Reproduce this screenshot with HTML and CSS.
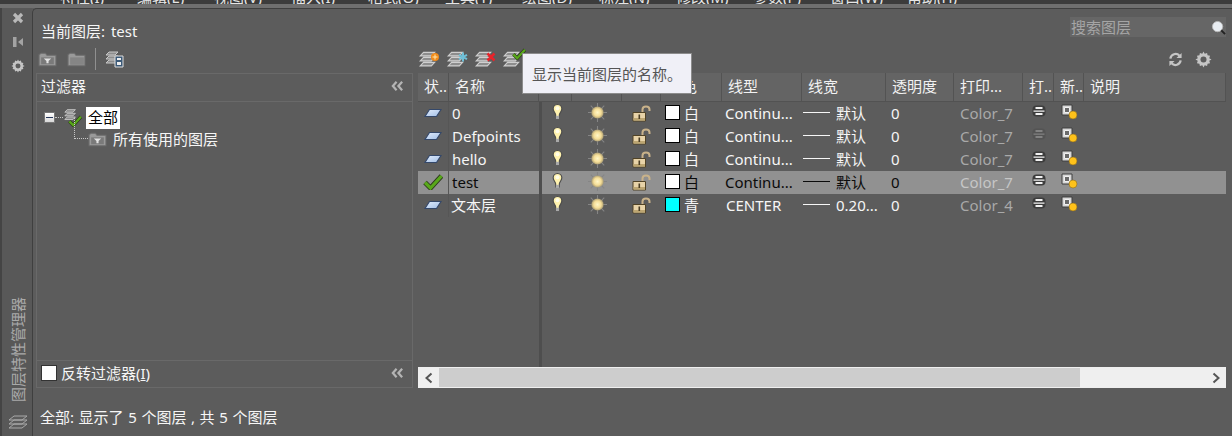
FILE: index.html
```html
<!DOCTYPE html>
<html lang="zh">
<head>
<meta charset="utf-8">
<title>图层特性管理器</title>
<link rel="stylesheet" href="styles.css">
</head>
<body>
<svg class="defs" width="0" height="0" aria-hidden="true">
  <defs>
    <radialGradient id="sunG"><stop offset="0" stop-color="#fff6c8"/><stop offset=".6" stop-color="#f5dd96"/><stop offset="1" stop-color="#a89a72"/></radialGradient>
    <linearGradient id="paneG" x1="0" y1="0" x2="1" y2="1"><stop offset="0" stop-color="#e4eefc"/><stop offset="1" stop-color="#9fbde6"/></linearGradient>
    <symbol id="stack" viewBox="0 0 18 16">
      <path d="M5 2h10l-3 3.200H2zM5 6.500h10l-3 3.200H2zM5 11h10l-3 3.200H2z" fill="#8d8d8d" stroke="#cfcfcf" stroke-width="1"/>
    </symbol>
    <symbol id="folderF" viewBox="0 0 18 14">
      <path d="M1 2.500 3 1h4l1.500 2H17v10H1z" fill="#9a9a9a" stroke="#6e6e6e"/>
      <path d="M3 5h12v6.500H3z" fill="#7a7a7a"/>
      <path d="M5.500 6h7L10 8.400V10.500H8V8.400z" fill="#e2e2e2"/>
    </symbol>
    <symbol id="folder" viewBox="0 0 18 14">
      <path d="M1 2.500 3 1h4l1.500 2H17v10H1z" fill="#9a9a9a" stroke="#6e6e6e"/>
      <path d="M3 5h13v7H3z" fill="#858585"/>
    </symbol>
    <symbol id="pane" viewBox="0 0 18 10">
      <path d="M5.500 1.500H17L12.500 8.500H1z" fill="url(#paneG)" stroke="#34486a" stroke-width="1.100"/>
    </symbol>
    <symbol id="check" viewBox="0 0 20 16">
      <path d="M2 8.500 7.500 14 18.500 2" fill="none" stroke="#2e3a1e" stroke-width="5"/>
      <path d="M2 8.500 7.500 14 18.500 2" fill="none" stroke="#58a81a" stroke-width="3.200"/>
    </symbol>
    <symbol id="bulb" viewBox="0 0 12 16">
      <path d="M6 1C3.400 1 2 3 2 5c0 2.200 1.700 3.200 2.300 5.500v3h3.400v-3C8.300 8.200 10 7.200 10 5c0-2-1.400-4-4-4z" fill="#fff2ae" stroke="#494949"/>
      <path d="M4.500 11.500h3v3h-3z" fill="#a9a9a9"/>
      <circle cx="6" cy="4.500" r="1.800" fill="#fffde9"/>
    </symbol>
    <symbol id="sun" viewBox="0 0 18 18">
      <path d="M9 0v3.500M9 14.500V18M0 9h3.500M14.500 9H18M2.600 2.600l2.500 2.500M12.900 12.900l2.500 2.500M15.400 2.600l-2.500 2.500M5.100 12.900l-2.500 2.500" stroke="#858585" stroke-width="1"/>
      <circle cx="9" cy="9" r="5.800" fill="url(#sunG)"/>
    </symbol>
    <symbol id="lock" viewBox="0 0 20 17">
      <path d="M10.500 8V4.500C10.500 2.500 12 1.500 14 1.500s3.500 1 3.500 3v1.500" fill="none" stroke="#c9b28a" stroke-width="2"/>
      <path d="M1 7.500h12.500v8.500H1z" fill="#e8d3a8" stroke="#514326"/>
      <path d="M1.500 13h11.500v2.500H1.500z" fill="#bda672"/>
      <path d="M6.500 9.500h1.600v4.500H6.500z" fill="#4a3d24"/>
    </symbol>
    <symbol id="printer" viewBox="0 0 14 12">
      <rect x=".5" y=".5" width="13" height="11" rx="4" fill="#3d3d3d"/>
      <path d="M3.500 2h7v2h-7zM1.500 5.500h11v1.200h-11zM3.500 8h7v2h-7z" fill="#f2f2f2"/>
    </symbol>
    <symbol id="newvp" viewBox="0 0 17 16">
      <path d="M1 1h10v10H1z" fill="#d8d8d8" stroke="#3e3e3e"/>
      <path d="M3.500 3.500h5v5h-5z" fill="#6a6a6a" stroke="#f0f0f0"/>
      <circle cx="12" cy="11" r="4" fill="#ffc21a" stroke="#8a6a20" stroke-width=".6"/>
    </symbol>
    <symbol id="gear" viewBox="0 0 18 18">
      <path d="M9 .5l1.300 2.300 2.500-.8.500 2.600 2.600.5-.8 2.500L17.500 9l-2.400 1.400.8 2.500-2.600.5-.5 2.600-2.500-.8L9 17.500l-1.300-2.300-2.500.8-.5-2.600-2.600-.5.800-2.500L.5 9l2.400-1.400-.8-2.500 2.600-.5.500-2.600 2.500.8z" fill="#c5c5c5"/>
      <circle cx="9" cy="9" r="3.200" fill="#5c5c5c"/>
    </symbol>
    <symbol id="refresh" viewBox="0 0 16 16">
      <path d="M2.500 7A5.600 5.600 0 0 1 12.200 4M13.500 9A5.600 5.600 0 0 1 3.800 12" fill="none" stroke="#c5c5c5" stroke-width="2.400"/>
      <path d="M14.500 1v5.500H9zM1.500 15V9.500H7z" fill="#c5c5c5"/>
    </symbol>
    <symbol id="dbl" viewBox="0 0 14 12">
      <path d="M6 1.500 2 6l4 4.500M12 1.500 8 6l4 4.500" fill="none" stroke="#b4b4b4" stroke-width="2.400"/>
    </symbol>
  </defs>
</svg>

<div class="app">
  <div class="menu-strip">
    <span>特性(I)</span><span>编辑(E)</span><span>视图(V)</span><span>插入(I)</span><span>格式(O)</span><span>工具(T)</span><span>绘图(D)</span><span>标注(N)</span><span>修改(M)</span><span>参数(P)</span><span>窗口(W)</span><span>帮助(H)</span>
  </div>
  <div class="shell">
    <aside class="rail">
      <svg class="rail-x" viewBox="0 0 12 12"><path d="M2 2l8 8M10 2l-8 8" stroke="#b9b9b9" stroke-width="3.200"/></svg>
      <svg class="rail-pin" viewBox="0 0 12 12"><path d="M1 1h3.500v10H1zM11 2v8L6 6z" fill="#a3a3a3"/></svg>
      <svg class="rail-gear"><use href="#gear"/></svg>
      <div class="rail-title">图层特性管理器</div>
      <svg class="rail-stack" viewBox="0 0 20 18"><path d="M6 3h13l-5 4H1zM6 7h13l-5 4H1zM6 11h13l-5 4H1z" fill="#5c5c5c" stroke="#a8a8a8"/></svg>
    </aside>
    <main class="panel">
      <header class="head">
        <div class="current">当前图层: test</div>
        <div class="search"><span>搜索图层</span>
          <svg class="search-ic" viewBox="0 0 16 16"><circle cx="7" cy="7" r="5.500" fill="#e8edf2" stroke="#b5b5b5"/><path d="M11 11l4 4" stroke="#222" stroke-width="2"/></svg>
        </div>
      </header>
      <div class="tools">
        <div class="tools-left">
          <svg class="t18"><use href="#folderF"/></svg>
          <svg class="t18"><use href="#folder"/></svg>
          <i class="tool-sep"></i>
          <svg class="tstate" viewBox="0 0 21 18"><path d="M5 2h9l-3 3H2zM5 6h9l-3 3H2zM5 10h9l-3 3H2z" fill="#8d8d8d" stroke="#c8c8c8"/><path d="M11 6h8v11h-8z" fill="#3c5a78" stroke="#ddd"/><path d="M13 8h4v2h-4zM13 12h4v3h-4z" fill="#eee"/></svg>
        </div>
        <div class="tools-right">
          <span class="tl"><svg class="tstack"><use href="#stack"/></svg><svg class="badge" viewBox="0 0 10 10"><circle cx="5" cy="5" r="4" fill="#f08a1a"/><path d="M5 2.500v5M2.500 5h5" stroke="#ffe9b0"/></svg></span>
          <span class="tl"><svg class="tstack"><use href="#stack"/></svg><svg class="badge" viewBox="0 0 10 10"><path d="M5 .5v9M1 2.800l8 4.400M9 2.800l-8 4.400" stroke="#6fc0d8" stroke-width="2"/></svg></span>
          <span class="tl"><svg class="tstack"><use href="#stack"/></svg><svg class="badge" viewBox="0 0 10 10"><path d="M1.500 1.500l7 7M8.500 1.500l-7 7" stroke="#e8232a" stroke-width="2.600"/></svg></span>
          <span class="tl"><svg class="tstack"><use href="#stack"/></svg><svg class="badge badge-check"><use href="#check"/></svg></span>
          <span class="tools-end">
            <svg class="t-refresh"><use href="#refresh"/></svg>
            <svg class="t-gear"><use href="#gear"/></svg>
          </span>
        </div>
      </div>
      <div class="content">
        <section class="filters">
          <div class="filters-head"><span>过滤器</span><svg class="dbl"><use href="#dbl"/></svg></div>
          <div class="tree">
            <div class="tree-root">
              <span class="minus"></span><i class="dots"></i>
              <span class="tree-ic"><svg class="ti-stack"><use href="#stack"/></svg><svg class="ti-check"><use href="#check"/></svg></span>
              <span class="tree-sel">全部</span>
            </div>
            <div class="tree-child">
              <i class="elbow"></i>
              <svg class="t18"><use href="#folderF"/></svg>
              <span>所有使用的图层</span>
            </div>
          </div>
          <div class="filters-foot">
            <span class="check-box"></span><span>反转过滤器(<u>I</u>)</span><svg class="dbl"><use href="#dbl"/></svg>
          </div>
        </section>
        <section class="layers">
          <div class="table">
            <div class="row hdr">
              <div>状..</div><div>名称</div><div class="gutter"></div><div></div><div></div><div></div><div>颜色</div><div>线型</div><div>线宽</div><div>透明度</div><div>打印...</div><div>打..</div><div>新..</div><div>说明</div>
            </div>

            <div class="row">
              <div class="c-st"><svg class="ic-pane"><use href="#pane"/></svg></div><div class="c-name">0</div><div class="gutter"></div>
              <div class="c-ic"><svg class="ic-bulb"><use href="#bulb"/></svg></div><div class="c-ic"><svg class="ic-sun"><use href="#sun"/></svg></div><div class="c-ic"><svg class="ic-lock"><use href="#lock"/></svg></div>
              <div class="c-color"><i class="sw"></i>白</div><div class="c-lt">Continu...</div><div class="c-lw"><i class="ln"></i>默认</div><div class="c-tr">0</div><div class="c-ps">Color_7</div>
              <div class="c-ic"><svg class="ic-print"><use href="#printer"/></svg></div><div class="c-ic"><svg class="ic-new"><use href="#newvp"/></svg></div><div></div>
            </div>

            <div class="row">
              <div class="c-st"><svg class="ic-pane"><use href="#pane"/></svg></div><div class="c-name">Defpoints</div><div class="gutter"></div>
              <div class="c-ic"><svg class="ic-bulb"><use href="#bulb"/></svg></div><div class="c-ic"><svg class="ic-sun"><use href="#sun"/></svg></div><div class="c-ic"><svg class="ic-lock"><use href="#lock"/></svg></div>
              <div class="c-color"><i class="sw"></i>白</div><div class="c-lt">Continu...</div><div class="c-lw"><i class="ln"></i>默认</div><div class="c-tr">0</div><div class="c-ps">Color_7</div>
              <div class="c-ic"><svg class="ic-print off"><use href="#printer"/></svg></div><div class="c-ic"><svg class="ic-new"><use href="#newvp"/></svg></div><div></div>
            </div>

            <div class="row">
              <div class="c-st"><svg class="ic-pane"><use href="#pane"/></svg></div><div class="c-name">hello</div><div class="gutter"></div>
              <div class="c-ic"><svg class="ic-bulb"><use href="#bulb"/></svg></div><div class="c-ic"><svg class="ic-sun"><use href="#sun"/></svg></div><div class="c-ic"><svg class="ic-lock"><use href="#lock"/></svg></div>
              <div class="c-color"><i class="sw"></i>白</div><div class="c-lt">Continu...</div><div class="c-lw"><i class="ln"></i>默认</div><div class="c-tr">0</div><div class="c-ps">Color_7</div>
              <div class="c-ic"><svg class="ic-print"><use href="#printer"/></svg></div><div class="c-ic"><svg class="ic-new"><use href="#newvp"/></svg></div><div></div>
            </div>

            <div class="row sel">
              <div class="c-st"><svg class="ic-check"><use href="#check"/></svg></div><div class="c-name">test</div><div class="gutter"></div>
              <div class="c-ic"><svg class="ic-bulb"><use href="#bulb"/></svg></div><div class="c-ic"><svg class="ic-sun"><use href="#sun"/></svg></div><div class="c-ic"><svg class="ic-lock"><use href="#lock"/></svg></div>
              <div class="c-color"><i class="sw"></i>白</div><div class="c-lt">Continu...</div><div class="c-lw"><i class="ln"></i>默认</div><div class="c-tr">0</div><div class="c-ps">Color_7</div>
              <div class="c-ic"><svg class="ic-print"><use href="#printer"/></svg></div><div class="c-ic"><svg class="ic-new"><use href="#newvp"/></svg></div><div></div>
            </div>

            <div class="row">
              <div class="c-st"><svg class="ic-pane"><use href="#pane"/></svg></div><div class="c-name cjk">文本层</div><div class="gutter"></div>
              <div class="c-ic"><svg class="ic-bulb"><use href="#bulb"/></svg></div><div class="c-ic"><svg class="ic-sun"><use href="#sun"/></svg></div><div class="c-ic"><svg class="ic-lock"><use href="#lock"/></svg></div>
              <div class="c-color"><i class="sw cyan"></i>青</div><div class="c-lt center">CENTER</div><div class="c-lw"><i class="ln"></i>0.20...</div><div class="c-tr">0</div><div class="c-ps">Color_4</div>
              <div class="c-ic"><svg class="ic-print"><use href="#printer"/></svg></div><div class="c-ic"><svg class="ic-new"><use href="#newvp"/></svg></div><div></div>
            </div>

            <div class="row filler"><div></div><div></div><div class="gutter"></div></div>
          </div>
          <div class="scroll">
            <svg class="arrow" viewBox="0 0 10 12"><path d="M7.500 1.500 2.500 6l5 4.500" fill="none" stroke="#555" stroke-width="2"/></svg>
            <div class="track"><div class="thumb"></div></div>
            <svg class="arrow" viewBox="0 0 10 12"><path d="M2.500 1.500 7.500 6l-5 4.500" fill="none" stroke="#555" stroke-width="2"/></svg>
          </div>
          <div class="tip">显示当前图层的名称。</div>
        </section>
      </div>
      <footer class="status">全部: 显示了 5 个图层 , 共 5 个图层</footer>
    </main>
  </div>
</div>
</body>
</html>
```

FILE: styles.css
```css
* { box-sizing: border-box; }
html, body { margin: 0; padding: 0; height: 100%; }
body {
  background: #4b4b4b;
  color: #f6f6f6;
  font: 15px/20px "Noto Sans", "Noto Sans CJK SC", sans-serif;
  overflow: hidden;
}
.defs { position: absolute; }
svg { display: block; flex: none; overflow: visible; }

.app { width: 1232px; height: 436px; display: flex; flex-direction: column; }

.menu-strip {
  height: 8px;
  background: #3c3c3c;
  border-bottom: 4px solid #6f6f6f;
  display: flex;
  gap: 33px;
  padding-left: 60px;
  overflow: hidden;
  line-height: 6px;
  color: #e6e6e6;
  white-space: nowrap;
}
.menu-strip span { margin-top: -6px; width: 44px; }

.shell { flex: 1; display: flex; min-height: 0; background: #5b5b5b; }

.rail {
  width: 32px;
  display: flex;
  flex-direction: column;
  align-items: center;
  padding: 4px 0 5px 2px;
  border-left: 2px solid #444;
  background: #585858;
}
.rail-x { width: 12px; height: 12px; }
.rail-pin { width: 12px; height: 12px; margin-top: 12px; }
.rail-gear { width: 14px; height: 14px; margin-top: 11px; }
.rail-title {
  margin-top: auto;
  writing-mode: vertical-rl;
  text-orientation: sideways;
  transform: rotate(180deg);
  color: #a9a9a9;
  font-size: 15px;
  line-height: 18px;
}
.rail-stack { width: 20px; height: 18px; margin-top: 11px; }

.panel {
  flex: 1;
  min-width: 0;
  display: flex;
  flex-direction: column;
  background: #5c5c5c;
  border-top: 1px solid #3f3f3f;
  border-left: 1px solid #3f3f3f;
  border-top-left-radius: 5px;
  padding-left: 3px;
}

.head { height: 36px; display: flex; align-items: flex-start; justify-content: space-between; }
.current { margin: 12px 0 0 5px; word-spacing: 2px; }
.search {
  width: 156px;
  height: 20px;
  margin: 8px 6px 0 0;
  padding-left: 1px;
  background: #666;
  color: #a5a5a5;
  display: flex;
  align-items: center;
  justify-content: space-between;
}
.search-ic { width: 15px; height: 15px; }

.tools { height: 28px; display: flex; align-items: center; }
.tools-left { width: 382px; display: flex; align-items: center; padding-left: 2px; gap: 10px; }
.t18 { width: 19px; height: 15px; }
.tool-sep { width: 1px; height: 22px; background: #909090; margin: 0 -2px 0 -1px; }
.tstate { width: 21px; height: 18px; }
.tools-right { flex: 1; display: flex; align-items: center; gap: 7px; padding-right: 20px; }
.tl { position: relative; width: 21px; height: 18px; }
.tstack { width: 20px; height: 18px; }
.badge { position: absolute; left: 12px; top: 2px; width: 10px; height: 10px; }
.badge-check { left: 10px; top: -2px; width: 14px; height: 12px; }
.tools-end { margin-left: auto; display: flex; align-items: center; gap: 12px; }
.t-refresh { width: 15px; height: 15px; }
.t-gear { width: 17px; height: 17px; }

.content { display: flex; height: 315px; gap: 5px; padding-right: 6px; }

.filters {
  width: 377px;
  display: flex;
  flex-direction: column;
  border: 1px solid #696969;
}
.filters-head {
  height: 28px;
  display: flex;
  align-items: center;
  justify-content: space-between;
  padding: 0 8px 4px 4px;
  border-bottom: 1px solid #696969;
}
.dbl { width: 13px; height: 12px; }
.tree { flex: 1; padding-top: 4px; position: relative; }
.tree-root { display: flex; align-items: center; height: 23px; padding-left: 7px; }
.minus {
  width: 11px; height: 11px;
  background: linear-gradient(#fff, #d8d8d8);
  position: relative;
  border: 1px solid #777;
}
.minus::after { content: ""; position: absolute; left: 1px; right: 1px; top: 4px; height: 1px; background: #27385c; }
.dots { width: 8px; border-top: 1px dotted #c8c8c8; }
.tree-ic { position: relative; width: 20px; height: 20px; margin-right: 3px; }
.ti-stack { position: absolute; left: 0; top: 0; width: 15px; height: 13px; }
.ti-check { position: absolute; left: 5px; top: 7px; width: 14px; height: 12px; }
.tree-sel { background: #fff; color: #000; padding: 0 2px; width: 34px; white-space: nowrap; height: 22px; line-height: 20px; }
.tree-child { display: flex; align-items: center; height: 22px; padding-left: 37px; position: relative; margin-top: -1px; }
.elbow { position: absolute; left: 37px; top: -10px; width: 14px; height: 21px; border-left: 1px dotted #c8c8c8; border-bottom: 1px dotted #c8c8c8; }
.tree-child .t18 { margin-left: 14px; }
.tree-child span { margin-left: 6px; }
.filters-foot {
  height: 27px;
  display: flex;
  align-items: center;
  padding: 0 8px 3px 4px;
  border-top: 1px solid #696969;
  gap: 4px;
}
.filters-foot .dbl { margin-left: auto; }
.check-box { width: 16px; height: 16px; background: #fff; border: 1px solid #333; }

.layers { flex: 1; min-width: 0; display: flex; flex-direction: column; position: relative; }
.table { height: 294px; display: flex; flex-direction: column; }
.row {
  display: grid;
  grid-template-columns: 31px 90px 3px 30px 50px 39px 61px 80px 84px 68px 69px 31px 30px 142px;
  height: 23px;
  align-items: center;
  white-space: nowrap;
}
.row > div { height: 100%; display: flex; align-items: center; padding-bottom: 2px; }
.gutter { background: #4e4e4e; }

.hdr { height: 29px; background: #646464; border-bottom: 1px solid #525252; }
.hdr > div { padding-left: 6px; border-right: 1px solid #535353; color: #f2f2f2; overflow: hidden; }
.hdr > .gutter { padding: 0; border: 0; background: #646464; }

.sel { background: #919191; color: #0b0b0b; }
.sel > .gutter { background: #4e4e4e; }
.filler { flex: 1; }
.filler > .gutter { height: 100%; }

.c-st { justify-content: center; border-right: 1px solid #565656; }
.c-name { padding-left: 3px; }
.c-name.cjk { padding-left: 2px; }
.c-ic { justify-content: center; }
.ic-pane { width: 18px; height: 10px; }
.ic-check { width: 20px; height: 16px; }
.ic-bulb { width: 13px; height: 18px; margin-top: -1px; }
.ic-sun { width: 19px; height: 19px; }
.ic-lock { width: 20px; height: 17px; margin-top: 2px; }
.ic-print { width: 14px; height: 12px; margin-top: -3px; }
.ic-print.off { opacity: .25; }
.ic-new { width: 17px; height: 16px; margin-top: -1px; }
.c-color { padding-left: 4px; gap: 4px; }
.sw { width: 15px; height: 15px; background: #fff; border: 1px solid #000; }
.sw.cyan { background: #0ff; }
.c-lt { padding-left: 3px; }
.c-lt.center { padding-left: 4px; }
.c-lw { padding-left: 1px; gap: 6px; }
.ln { width: 27px; height: 1px; background: currentColor; }
.c-tr { padding-left: 5px; }
.c-ps { padding-left: 6px; color: #a9a9a9; }
.sel .c-ps { color: #c6c6c6; }

.scroll { height: 21px; background: #efefef; display: flex; align-items: center; }
.arrow { width: 10px; height: 12px; margin: 0 5px 0 6px; }
.track { flex: 1; height: 19px; }
.thumb { width: 641px; height: 100%; background: #cdcdcd; }

.tip {
  position: absolute;
  left: 104px;
  top: -20px;
  width: 170px;
  height: 41px;
  padding: 10px 0 0 9px;
  background: #f0f0f7;
  border: 1px solid #8c8c8c;
  color: #555;
  font-size: 15px;
}

.status { flex: 1; padding: 19px 0 0 4px; word-spacing: .7px; }
```
